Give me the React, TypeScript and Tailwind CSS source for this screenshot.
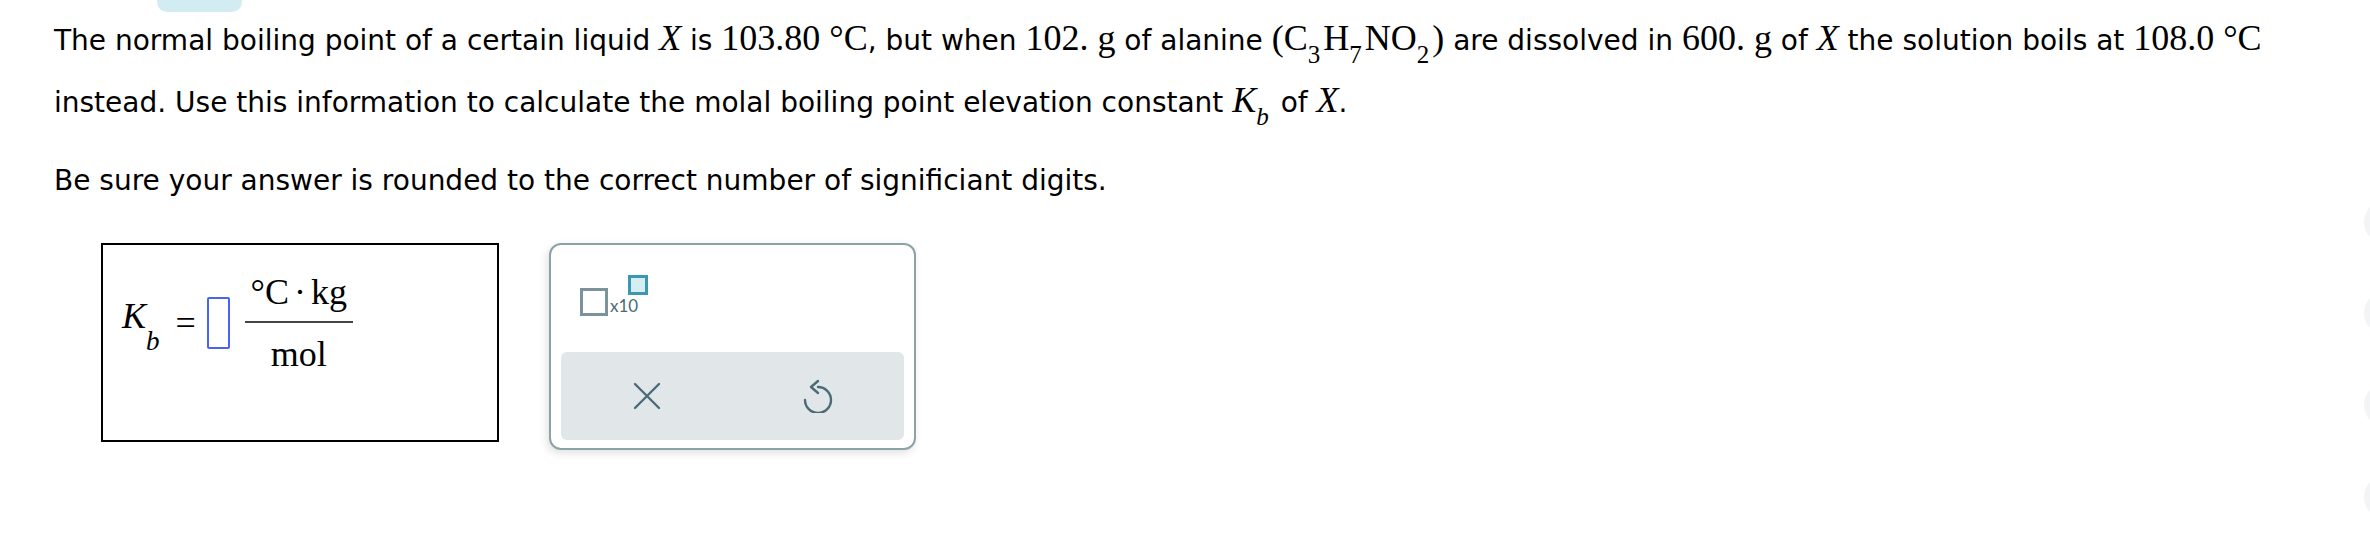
const serif = "font-['Liberation_Serif','Times_New_Roman',serif]";

function M({ children, i }: { children: React.ReactNode; i?: boolean }) {
  return <span className={`${serif} text-[36px] leading-none ${i ? 'italic' : ''}`}>{children}</span>;
}

function Sub({ children }: { children: React.ReactNode }) {
  return <span className="relative top-[13px] mr-[3px] text-[25px] leading-none">{children}</span>;
}

function Keypad() {
  return (
    <div className="w-[367px] h-[207px] rounded-[12px] border-2 border-[#8da1a9] bg-white shadow-[-2px_3px_8px_rgba(0,0,0,0.12)] flex flex-col px-[10px] pb-[8px]">
      <div className="h-[107px] pt-[43px] pl-[19px]">
        <div className="relative flex items-end">
          <div className="w-[28px] h-[28px] border-[3px] border-[#7a939c]" />
          <span className="ml-[2px] mb-[2px] text-[17px] leading-none text-[#4d6a74] font-['Lato',sans-serif]">x10</span>
          <div className="absolute left-[48px] top-[-13px] w-[20px] h-[20px] border-[3px] border-[#3c97b1] bg-[#d4eef4]" />
        </div>
      </div>
      <div className="flex-1 grid grid-cols-2 rounded-[6px] bg-[#e1e6e9]">
        <div className="flex items-center justify-center">
          <svg width="28" height="28" viewBox="0 0 28 28" fill="none" stroke="#4a6b77" strokeWidth="2.4" strokeLinecap="round">
            <path d="M2 2 L26 26 M26 2 L2 26" />
          </svg>
        </div>
        <div className="flex items-center justify-center">
          <svg width="30" height="34" viewBox="0 0 30 34" fill="none" stroke="#4a6b77" strokeWidth="2.4" strokeLinecap="round" strokeLinejoin="round">
            <path d="M15 8 A13 13 0 1 1 2 21" />
            <path d="M15 2 L8 8 L15 14" />
          </svg>
        </div>
      </div>
    </div>
  );
}

export default function App() {
  return (
    <div className="relative w-full h-[534px] overflow-hidden bg-white text-black font-['DejaVu_Sans','Verdana',sans-serif]">
      <div className="absolute left-[157px] top-0 w-[85px] h-[12px] rounded-b-[10px] bg-[#d2ecf1]" />

      <div className="pl-[54px] pt-[10px] text-[28px]">
        <p className="leading-[62px] whitespace-nowrap">
          The normal boiling point of a certain liquid <M i>X</M> is <M>103.80 °C</M>, but when <M>102. g</M> of
          alanine{' '}
          <M>
            (C<Sub>3</Sub>H<Sub>7</Sub>NO<Sub>2</Sub>)
          </M>{' '}
          are dissolved in <M>600. g</M> of <M i>X</M> the solution boils at <M>108.0 °C</M>
          <br />
          instead. Use this information to calculate the molal boiling point elevation constant{' '}
          <M i>
            K<Sub>b</Sub>
          </M>{' '}
          of <M i>X</M>.
        </p>
        <p className="mt-[16px] leading-[62px]">Be sure your answer is rounded to the correct number of significiant digits.</p>

        <div className="mt-[31px] ml-[47px] flex items-start gap-[50px]">
          <div className="w-[398px] h-[199px] border-2 border-black pt-[27px] pl-[19px]">
            <div className={`flex items-center ${serif}`}>
              <span className="relative top-[-7px] italic text-[36px] leading-none">
                K<span className="relative top-[22px] text-[27px] leading-none">b</span>
              </span>
              <span className="ml-[16px] text-[36px] leading-none">=</span>
              <div className="ml-[11px] w-[23px] h-[52px] rounded-[2px] border-2 border-[#4a63f0]" />
              <div className="ml-[15px] flex flex-col items-center">
                <span className="pb-[9px] text-[36px] leading-[40px] whitespace-nowrap">
                  °C<span className="mx-[5px]">·</span>kg
                </span>
                <div className="w-[108px] h-[2px] bg-[#444]" />
                <span className="pt-[11px] text-[36px] leading-[40px]">mol</span>
              </div>
            </div>
          </div>
          <Keypad />
        </div>
      </div>

      <div className="absolute right-[-38px] top-[200px] w-[44px] h-[44px] rounded-full bg-[#f3f4f5]" />
      <div className="absolute right-[-38px] top-[291px] w-[44px] h-[44px] rounded-full bg-[#f3f4f5]" />
      <div className="absolute right-[-38px] top-[383px] w-[44px] h-[44px] rounded-full bg-[#f3f4f5]" />
      <div className="absolute right-[-38px] top-[475px] w-[44px] h-[44px] rounded-full bg-[#f3f4f5]" />
    </div>
  );
}
